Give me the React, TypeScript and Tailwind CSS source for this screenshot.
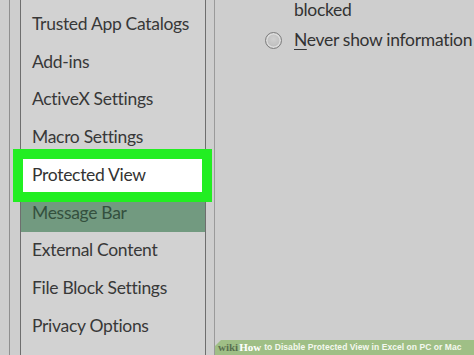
import React from "react";

const items = [
  "Trusted App Catalogs",
  "Add-ins",
  "ActiveX Settings",
  "Macro Settings",
  "Protected View",
  "Message Bar",
  "External Content",
  "File Block Settings",
  "Privacy Options",
];

export default function App() {
  return (
    <div
      className="relative w-[474px] h-[355px] overflow-hidden bg-[#cecece] flex"
      style={{ fontFamily: 'Lato, "Noto Sans", sans-serif' }}
    >
      <div className="w-[9px] shrink-0" />
      <div className="w-px shrink-0 bg-[#8f8f8f]" />
      <div className="w-[10px] shrink-0" />
      <div className="w-px shrink-0 bg-[#6e6e6e]" />
      <div className="w-[184px] shrink-0 flex flex-col pt-[5px] bg-[#d2d2d2] overflow-hidden">
        {items.map((t) => {
          const sel = t === "Message Bar";
          const prot = t === "Protected View";
          return (
            <div
              key={t}
              className={
                "h-[37.75px] shrink-0 flex items-center pl-[11px] text-[17.5px] tracking-[-0.3px] whitespace-nowrap " +
                (sel
                  ? "bg-[#729a80] text-[#34503e]"
                  : prot
                  ? "bg-white text-[#333333]"
                  : "text-[#383838]")
              }
            >
              {t}
            </div>
          );
        })}
      </div>
      <div className="w-px shrink-0 bg-[#6e6e6e]" />
      <div className="w-[8px] shrink-0" />
      <div className="w-px shrink-0 bg-[#9a9a9a]" />
      <div className="flex-1 flex flex-col pl-[50px] text-[17.5px] tracking-[-0.3px] text-[#333333] whitespace-nowrap">
        <div className="pl-[29px] leading-[24px] mt-[-2px]">blocked</div>
        <div className="flex items-center mt-[6px]">
          <div className="w-[17px] h-[17px] rounded-full border border-[#7d7d7d] bg-[radial-gradient(circle_at_50%_40%,#d0d0d0_0%,#c0c0c0_60%,#aaaaaa_100%)] shadow-[inset_0_0_0_1.5px_#dedede] shrink-0" />
          <div className="ml-[12px] leading-[24px]">
            <span className="underline underline-offset-[3px] decoration-1">N</span>ever show information
          </div>
        </div>
      </div>

      <div className="absolute left-[13px] top-[149px] w-[199px] h-[53px] border-[10px] border-[#22ee22] pointer-events-none" />

      <div className="absolute left-[215px] top-[340px] w-[259px] h-[15px] bg-[#9fbf86] [clip-path:polygon(6px_0,100%_0,100%_100%,0_100%,0_6px)] flex items-center pl-[3px] whitespace-nowrap">
        <span
          className="text-[11px] font-bold text-[#5a7050] leading-none"
          style={{ fontFamily: '"Liberation Serif", serif' }}
        >
          wiki
        </span>
        <span
          className="text-[11px] font-bold text-white leading-none ml-[1px]"
          style={{ fontFamily: '"Liberation Serif", serif' }}
        >
          How
        </span>
        <span
          className="text-[8.5px] font-bold tracking-[0.05px] text-[#f4f8ef] leading-none ml-[3px]"
          style={{ fontFamily: '"Liberation Sans", sans-serif' }}
        >
          to Disable Protected View in Excel on PC or Mac
        </span>
      </div>
    </div>
  );
}
